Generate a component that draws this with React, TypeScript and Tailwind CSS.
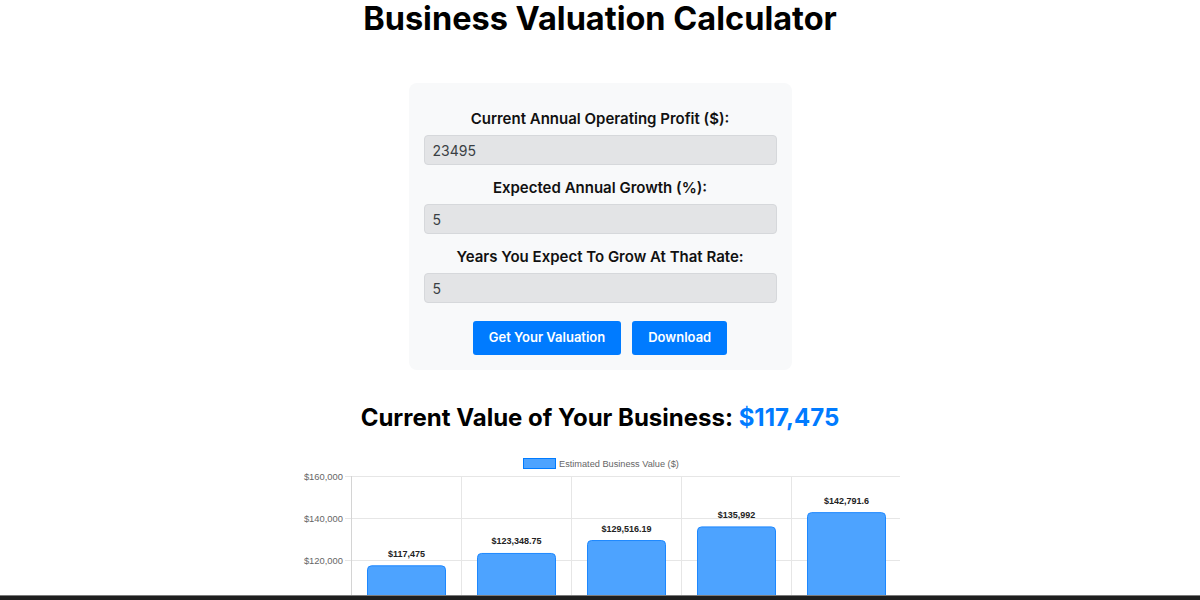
import type { ReactNode } from 'react'

const font = { fontFamily: 'Inter, "Noto Sans", sans-serif' }

const values = [117475, 123348.75, 129516.19, 135992, 142791.6]
const labels = ['$117,475', '$123,348.75', '$129,516.19', '$135,992', '$142,791.6']

// chart geometry, local to the svg (left = page x 300, top = page y 445)
const plotLeft = 51.5
const plotRight = 600
const catWidth = 110
const barWidth = 78
const yTop = 31
const pxPerDollar = 42 / 20000
const yFor = (v: number) => yTop + (160000 - v) * pxPerDollar

function Field({ label, value }: { label: string; value: string }) {
  return (
    <div className="flex flex-col">
      <label className="text-center text-[15px] font-semibold leading-[22px] text-[#111] mb-[5px]">{label}</label>
      <input
        readOnly
        value={value}
        className="h-[30px] w-full rounded-[4px] border border-[#d6d8db] bg-[#e3e4e6] px-[8px] text-[14px] text-[#3a3f44] outline-none"
        style={font}
      />
    </div>
  )
}

function Button({ children }: { children: ReactNode }) {
  return (
    <button className="h-[34px] rounded-[3px] bg-[#007bff] px-[16px] text-[13px] font-semibold text-white" style={font}>
      {children}
    </button>
  )
}

function Chart() {
  const topBar = (x: number, y: number, w: number, h: number, r: number) =>
    `M${x},${y + h} L${x},${y + r} Q${x},${y} ${x + r},${y} L${x + w - r},${y} Q${x + w},${y} ${x + w},${y + r} L${x + w},${y + h}`

  return (
    <svg width="600" height="160" viewBox="0 0 600 160" className="block" style={{ fontFamily: '"Liberation Sans", Arial, sans-serif' }}>
      {/* legend */}
      <rect x="223.5" y="13.5" width="32" height="10" fill="#4da3ff" stroke="#007bff" strokeWidth="1" />
      <text x="259" y="22" fontSize="9.2" fill="#666">Estimated Business Value ($)</text>

      {/* horizontal grid */}
      {[0, 1, 2, 3].map((i) => (
        <line key={i} x1="45" x2={plotRight} y1={yTop + i * 42 + 0.5} y2={yTop + i * 42 + 0.5} stroke="#e6e6e6" strokeWidth="1" />
      ))}
      {/* vertical grid */}
      {[0, 1, 2, 3, 4].map((i) => (
        <line
          key={i}
          x1={plotLeft + i * catWidth}
          x2={plotLeft + i * catWidth}
          y1={yTop}
          y2="160"
          stroke={i === 0 ? '#d4d4d4' : '#e6e6e6'}
          strokeWidth="1"
        />
      ))}
      {['$160,000', '$140,000', '$120,000'].map((t, i) => (
        <text key={t} x="43" y={yTop + i * 42 + 3.5} fontSize="9.4" fill="#666" textAnchor="end">
          {t}
        </text>
      ))}

      {/* bars */}
      {values.map((v, i) => {
        const x = plotLeft + i * catWidth + (catWidth - barWidth) / 2
        const y = yFor(v) + 0.5
        return (
          <g key={i}>
            <path d={topBar(x, y, barWidth, 200, 4)} fill="#4da3ff" stroke="#1d88ff" strokeWidth="1" />
            <text x={x + barWidth / 2} y={y - 9} fontSize="9" fontWeight="bold" fill="#222" textAnchor="middle">
              {labels[i]}
            </text>
          </g>
        )
      })}
    </svg>
  )
}

export default function App() {
  return (
    <div className="flex h-screen flex-col bg-white" style={font}>
      <div className="flex flex-1 flex-col items-center overflow-hidden">
        <h1 className="text-[32.5px] font-bold leading-[38px] text-black">Business Valuation Calculator</h1>

        <div className="mt-[45px] flex w-[383px] flex-col gap-[12px] rounded-[8px] bg-[#f8f9fa] px-[15px] pt-[25px] pb-[15px]">
          <Field label="Current Annual Operating Profit ($):" value="23495" />
          <Field label="Expected Annual Growth (%):" value="5" />
          <Field label="Years You Expect To Grow At That Rate:" value="5" />
          <div className="mt-[6px] flex justify-center gap-[11px]">
            <Button>Get Your Valuation</Button>
            <Button>Download</Button>
          </div>
        </div>

        <h2 className="mt-[32px] text-[24px] font-bold leading-[32px] text-black">
          Current Value of Your Business: <span className="text-[#007bff]">$117,475</span>
        </h2>

        <div className="mt-[11px]">
          <Chart />
        </div>
      </div>
      <div className="h-[5px] shrink-0 border-t border-[#7a7a7a] bg-[#1f1f1f]" />
    </div>
  )
}
